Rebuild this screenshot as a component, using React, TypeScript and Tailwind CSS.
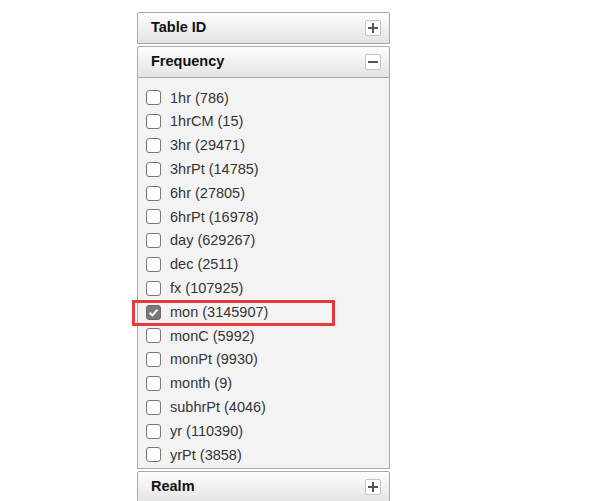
import React from "react";

const items: [string, boolean][] = [
  ["1hr (786)", false],
  ["1hrCM (15)", false],
  ["3hr (29471)", false],
  ["3hrPt (14785)", false],
  ["6hr (27805)", false],
  ["6hrPt (16978)", false],
  ["day (629267)", false],
  ["dec (2511)", false],
  ["fx (107925)", false],
  ["mon (3145907)", true],
  ["monC (5992)", false],
  ["monPt (9930)", false],
  ["month (9)", false],
  ["subhrPt (4046)", false],
  ["yr (110390)", false],
  ["yrPt (3858)", false],
];

function Btn({ minus }: { minus?: boolean }) {
  return (
    <span className="w-[16px] h-[16px] border border-[#c4c4c4] bg-white rounded-[2px] flex items-center justify-center">
      <svg width="10" height="10" viewBox="0 0 10 10">
        <rect x="0" y="4" width="10" height="2" fill="#555" />
        {!minus && <rect x="4" y="0" width="2" height="10" fill="#555" />}
      </svg>
    </span>
  );
}

function Header({ title, minus }: { title: string; minus?: boolean }) {
  return (
    <div className="h-[32px] border border-[#a9a9a9] rounded-t-[2px] bg-gradient-to-b from-[#fdfdfd] to-[#e4e4e4] flex items-center justify-between pl-[13px] pr-[8px]">
      <span className="font-bold text-[14.5px] text-[#111]">{title}</span>
      <Btn minus={minus} />
    </div>
  );
}

export default function App() {
  return (
    <div className="w-[611px] h-[501px] bg-white overflow-hidden relative" style={{ fontFamily: '"Liberation Sans", Arial, sans-serif' }}>
      <div className="ml-[137px] mt-[12px] w-[253px] flex flex-col">
        <Header title="Table ID" />
        <div className="h-[2px]" />
        <Header title="Frequency" minus />
        <div className="border-x border-b border-[#a9a9a9] bg-[#f3f3f3] pt-[8px] pb-[1px] flex flex-col">
          {items.map(([label, checked]) => (
            <div key={label} className="h-[23.8px] flex items-center pl-[8px] relative">
              {checked ? (
                <span className="w-[15px] h-[15px] rounded-[3px] bg-[#7a7a7a] border border-[#6a6a6a] flex items-center justify-center">
                  <svg width="11" height="11" viewBox="0 0 10 10">
                    <path d="M1.5 5.2 L4 7.6 L8.6 2.4" stroke="white" strokeWidth="1.8" fill="none" />
                  </svg>
                </span>
              ) : (
                <span className="w-[15px] h-[15px] rounded-[3px] bg-white border border-[#767676]" />
              )}
              <span className="ml-[9px] text-[14.5px] text-[#333] leading-none">{label}</span>
              {checked && (
                <div className="absolute left-[-6px] top-[0px] w-[203px] h-[26px] border-[3px] border-[#e83a3a]" />
              )}
            </div>
          ))}
        </div>
        <div className="h-[2px]" />
        <Header title="Realm" />
      </div>
    </div>
  );
}
